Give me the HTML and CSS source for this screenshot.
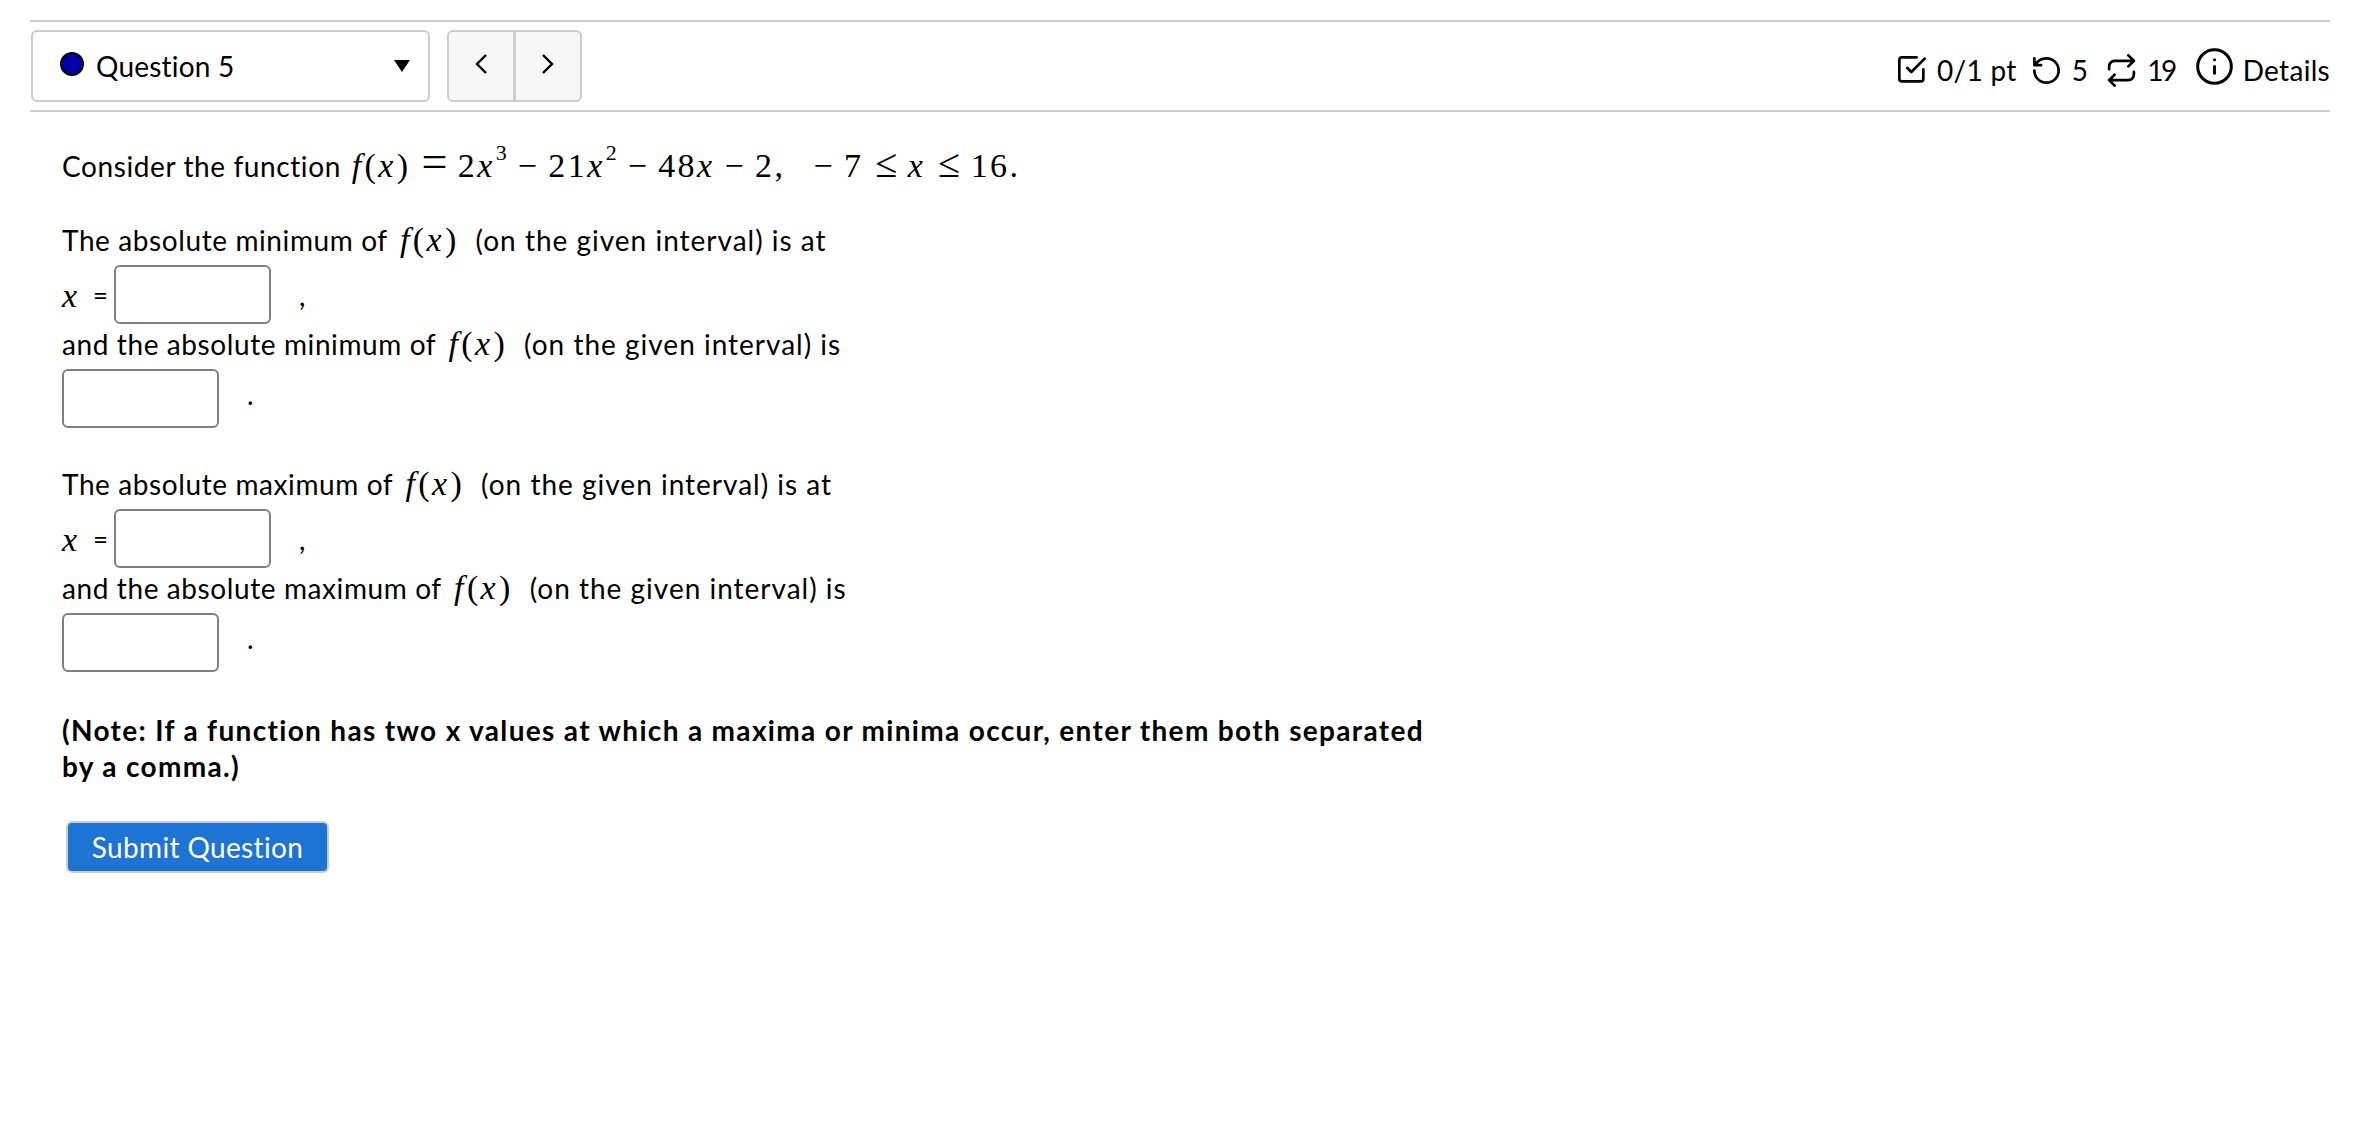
FILE: index.html
```html
<!DOCTYPE html>
<html lang="en">
<head>
<meta charset="utf-8">
<title>Question 5</title>
<link rel="stylesheet" href="styles.css">
</head>
<body>
<header class="bar">
  <div class="picker">
    <span class="dot"></span>
    <span class="picker-label">Question 5</span>
    <span class="caret"></span>
  </div>
  <div class="nav">
    <button class="nav-btn" type="button" aria-label="Previous">
      <svg class="chev" viewBox="0 0 12 20"><path d="M11 1 2 10l9 9"/></svg>
    </button>
    <button class="nav-btn nav-next" type="button" aria-label="Next">
      <svg class="chev" viewBox="0 0 12 20"><path d="M1 1l9 9-9 9"/></svg>
    </button>
  </div>
  <div class="meta">
    <svg class="ico ico-check" viewBox="2 2 21 21"><path d="M9 11l3 3L22 4M21 12v7a2 2 0 0 1-2 2H5a2 2 0 0 1-2-2V5a2 2 0 0 1 2-2h11"/></svg>
    <span class="meta-text">0/1 pt</span>
    <svg class="ico ico-undo" viewBox="2 2 20 20"><path d="M3 12a9 9 0 1 0 9-9 9.75 9.75 0 0 0-6.74 2.74L3 8M3 3v5h5"/></svg>
    <span class="meta-text">5</span>
    <svg class="ico ico-repeat" viewBox="2 0 20 24"><path d="M17 1l4 4-4 4M3 11V9a4 4 0 0 1 4-4h14M7 23l-4-4 4-4M21 13v2a4 4 0 0 1-4 4H3"/></svg>
    <span class="meta-text meta-count">19</span>
    <svg class="ico ico-info" viewBox="1 1 22 22"><circle cx="12" cy="12" r="10"/><path d="M12 16v-4M12 8h.01"/></svg>
    <span class="meta-text">Details</span>
  </div>
</header>

<main class="question">
  <p class="intro">Consider the function <span class="math"><i>f</i>(<i>x</i>)<span class="equals">=</span>2<i>x</i><sup>3</sup><span class="bin">−</span>21<i>x</i><sup>2</sup><span class="bin">−</span>48<i>x</i><span class="bin">−</span>2,<span class="quad">−</span>7<span class="rel">≤</span><i>x</i><span class="rel">≤</span>16.</span></p>

  <section class="block">
    <div class="line">The absolute minimum of <span class="math"><i>f</i>(<i>x</i>)</span> <span class="tail">(on the given interval) is at</span></div>
    <div class="answer"><span class="math var"><i>x</i></span><span class="eq">=</span><input class="box" type="text"><span class="punct">,</span></div>
    <div class="line">and the absolute minimum of <span class="math"><i>f</i>(<i>x</i>)</span> <span class="tail">(on the given interval) is</span></div>
    <div class="answer"><input class="box" type="text"><span class="punct punct-end">.</span></div>
  </section>

  <section class="block">
    <div class="line">The absolute maximum of <span class="math"><i>f</i>(<i>x</i>)</span> <span class="tail">(on the given interval) is at</span></div>
    <div class="answer"><span class="math var"><i>x</i></span><span class="eq">=</span><input class="box" type="text"><span class="punct">,</span></div>
    <div class="line">and the absolute maximum of <span class="math"><i>f</i>(<i>x</i>)</span> <span class="tail">(on the given interval) is</span></div>
    <div class="answer"><input class="box" type="text"><span class="punct punct-end">.</span></div>
  </section>

  <p class="note">(Note: If a function has two x values at which a maxima or minima occur, enter them both separated by a comma.)</p>

  <button class="submit" type="button">Submit Question</button>
</main>
</body>
</html>
```
FILE: styles.css
```css
* { box-sizing: border-box; }
html, body { margin: 0; background: #fff; }
body {
  font-family: Lato, "Noto Sans", sans-serif;
  font-size: 28px;
  letter-spacing: 0.6px;
  color: #000;
  padding: 20px 30px 0;
}
.bar {
  display: flex;
  align-items: center;
  height: 92px;
  border-top: 2px solid #ccc;
  border-bottom: 2px solid #ccc;
}
.picker {
  display: flex;
  align-items: center;
  width: 399px;
  height: 72px;
  margin-left: 1px;
  border: 2px solid #ccc;
  border-radius: 6px;
  padding: 0 18px 0 27px;
  letter-spacing: 0.2px;
}
.dot {
  width: 24px;
  height: 24px;
  border: 2px solid #000;
  border-radius: 50%;
  background: #0000aa;
  margin: -4px 12px 0 0;
}
.picker-label { flex: 1; }
.caret {
  width: 0;
  height: 0;
  border-left: 8px solid transparent;
  border-right: 8px solid transparent;
  border-top: 12px solid #000;
}
.nav {
  display: flex;
  margin-left: 17px;
  height: 72px;
  width: 135px;
  border: 2px solid #ccc;
  border-radius: 6px;
  background: #f7f7f7;
}
.nav-btn {
  flex: 1;
  display: flex;
  align-items: center;
  justify-content: center;
  border: 0;
  padding: 0 0 4px;
  background: none;
}
.nav-next { border-left: 3px solid #ccc; }
.chev { width: 12px; height: 20px; fill: none; stroke: #000; stroke-width: 2.4; }
.meta {
  margin-left: auto;
  display: flex;
  align-items: center;
  padding-top: 8px;
  letter-spacing: 0.3px;
}
.meta-count { letter-spacing: -2.5px; margin-right: 2px; }
.ico { fill: none; stroke: #000; stroke-width: 2; stroke-linecap: round; stroke-linejoin: round; flex: none; }
.ico-check { width: 28px; height: 28px; margin-right: 11px; }
.ico-undo { width: 29px; height: 27px; margin: 0 11px 0 15px; }
.ico-repeat { width: 29px; height: 33px; margin: 0 11px 0 19px; }
.ico-info { width: 37px; height: 37px; margin: -8px 10px 0 19px; stroke-width: 1.8; }
.question { padding: 0 32px; }
.intro { margin: 35px 0 36px; line-height: 38px; }
.math {
  font-family: "Liberation Serif", serif;
  font-size: 34px;
  line-height: 1;
  letter-spacing: 2.4px;
  white-space: nowrap;
  margin: 0 9px 0 5px;
}
.answer .math { margin: 0; }
.intro .math { margin: 0 0 0 3px; }
.math i { margin-right: 1px; }
.math sup { font-size: 22px; line-height: 0; vertical-align: 17px; letter-spacing: 0; margin-right: 2px; }
.equals { font-size: 46px; line-height: 0; margin: 0 8px 0 11px; }
.rel { font-size: 40px; line-height: 0; margin: 0 8px 0 12px; }
.bin { margin: 0 9px; }
.quad { margin: 0 9px 0 28px; }
.tail { letter-spacing: 1px; }
.block { margin-bottom: 36px; }
.line { line-height: 38px; }
.answer {
  display: flex;
  align-items: flex-start;
  height: 66px;
  padding-top: 6px;
}
.var { width: 31px; padding-top: 14px; }
.eq { font-size: 26px; width: 14px; margin-right: 7px; padding-top: 14px; }
.box {
  display: block;
  width: 157px;
  height: 59px;
  border: 2px solid #808080;
  border-radius: 6px;
  background: #fff;
  padding: 0;
}
.punct { margin-left: 28px; padding-top: 11px; line-height: 38px; }
.punct-end { padding-top: 6px; }
.note { margin: 39px 0 37px; font-weight: 700; line-height: 36px; width: 1385px; letter-spacing: 1.33px; }
.submit {
  display: block;
  margin-left: 4px;
  width: 263px;
  height: 52px;
  background: #1d74d4;
  color: #fff;
  font: inherit;
  letter-spacing: 0.35px;
  border: 2px solid #ccc;
  border-radius: 6px;
  padding: 0;
}
```
